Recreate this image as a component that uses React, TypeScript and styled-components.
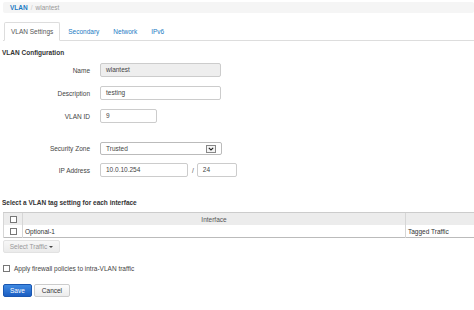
import React from "react";
import styled, { createGlobalStyle } from "styled-components";

const GlobalStyle = createGlobalStyle`
  html, body {
    margin: 0;
    padding: 0;
    background: #fff;
  }
  body {
    font-family: "Liberation Sans", Arial, sans-serif;
    font-size: 6.5px;
    color: #333;
  }
`;

const Page = styled.div`
  padding: 2px 0 0 3px;
`;

const Breadcrumb = styled.div`
  height: 11px;
  line-height: 12px;
  padding-left: 7px;
  background: #f5f5f5;
  border-radius: 2px;
  display: flex;
  gap: 3px;
`;

const Crumb = styled.span<{ $active?: boolean }>`
  color: ${(p) => (p.$active ? "#999" : "#1b7bc4")};
  font-weight: ${(p) => (p.$active ? "normal" : "bold")};
`;

const Sep = styled.span`
  color: #ccc;
`;

const TabBar = styled.div`
  margin-top: 9px;
  height: 18px;
  display: flex;
  gap: 2px;
  border-bottom: 1px solid #ddd;
  padding-left: 1px;
`;

const Tab = styled.div<{ $active?: boolean }>`
  box-sizing: border-box;
  height: 19px;
  margin-bottom: -1px;
  padding: 0 ${(p) => (p.$active ? 6 : 5)}px;
  line-height: 17px;
  border: 1px solid ${(p) => (p.$active ? "#ddd" : "transparent")};
  border-bottom-color: ${(p) => (p.$active ? "#fff" : "transparent")};
  border-radius: 2px 2px 0 0;
  background: ${(p) => (p.$active ? "#fff" : "transparent")};
  color: ${(p) => (p.$active ? "#555" : "#1b7bc4")};
`;

const Heading = styled.div<{ $top: number }>`
  margin-top: ${(p) => p.$top}px;
  font-weight: bold;
  line-height: 8px;
  color: #333;
  margin-left: -1px;
`;

const Form = styled.div`
  margin-top: 6px;
  display: flex;
  flex-direction: column;
`;

const Row = styled.div<{ $gap: number }>`
  display: flex;
  align-items: center;
  margin-bottom: ${(p) => p.$gap}px;
`;

const Label = styled.label`
  width: 87px;
  text-align: right;
  margin-right: 10px;
  color: #444;
`;

const Input = styled.div<{ $w: number; $disabled?: boolean }>`
  box-sizing: border-box;
  width: ${(p) => p.$w}px;
  height: 14px;
  line-height: 12px;
  padding-left: 5px;
  border: 1px solid #ccc;
  border-radius: 2px;
  background: ${(p) => (p.$disabled ? "#eee" : "#fff")};
  color: #444;
`;

const Select = styled.div`
  box-sizing: border-box;
  width: 122px;
  height: 13px;
  padding: 0 5px 0 5px;
  border: 1px solid #bbb;
  border-radius: 2px;
  display: flex;
  align-items: center;
  justify-content: space-between;
  color: #444;
`;

const ArrowBox = styled.span`
  box-sizing: border-box;
  width: 10px;
  height: 8px;
  border: 1px solid #888;
  background: #f4f4f4;
  display: flex;
  align-items: center;
  justify-content: center;
`;

const Slash = styled.span`
  margin: 0 3px 0 4px;
  color: #555;
`;

const Table = styled.table`
  margin-top: 5px;
  width: 100%;
  border-collapse: collapse;
  border-bottom: 1px solid #bbb;
`;

const HeadCell = styled.th<{ $w?: number }>`
  height: 12px;
  padding: 0;
  background: #ececec;
  border-top: 1px solid #ccc;
  border-left: 1px solid #d6d6d6;
  font-weight: normal;
  color: #555;
  text-align: center;
  width: ${(p) => (p.$w ? `${p.$w}px` : "auto")};
`;

const Cell = styled.td<{ $center?: boolean }>`
  height: 12px;
  padding: 0 2px;
  border-left: 1px solid #d6d6d6;
  text-align: ${(p) => (p.$center ? "center" : "left")};
  color: #333;
`;

const Check = styled.span`
  display: inline-block;
  box-sizing: border-box;
  width: 7px;
  height: 7px;
  border: 1px solid #777;
  background: #fff;
  vertical-align: middle;
`;

const GhostButton = styled.div`
  margin-top: 2px;
  box-sizing: border-box;
  width: 57px;
  height: 13px;
  display: flex;
  align-items: center;
  justify-content: center;
  gap: 2px;
  background: linear-gradient(#f7f7f7, #ebebeb);
  border: 1px solid #e2e2e2;
  border-radius: 2px;
  color: #999;
`;

const Caret = styled.span`
  width: 0;
  height: 0;
  border-left: 2px solid transparent;
  border-right: 2px solid transparent;
  border-top: 2px solid #444;
  margin-top: 1px;
`;

const CheckRow = styled.div`
  margin-top: 11px;
  display: flex;
  align-items: center;
  gap: 4px;
  height: 8px;
  color: #444;
`;

const Actions = styled.div`
  margin-top: 12px;
  display: flex;
  gap: 2px;
`;

const Button = styled.button<{ $primary?: boolean }>`
  box-sizing: border-box;
  height: 13px;
  padding: 0 ${(p) => (p.$primary ? 6 : 7)}px;
  font-family: inherit;
  font-size: 6.5px;
  border-radius: 2px;
  border: 1px solid ${(p) => (p.$primary ? "#1a56b0" : "#ccc")};
  background: ${(p) =>
    p.$primary
      ? "linear-gradient(#3f8ae2, #1b5dc2)"
      : "linear-gradient(#fdfdfd, #ececec)"};
  color: ${(p) => (p.$primary ? "#fff" : "#333")};
`;

export default function App() {
  return (
    <>
      <GlobalStyle />
      <Page>
        <Breadcrumb>
          <Crumb>VLAN</Crumb>
          <Sep>/</Sep>
          <Crumb $active>wlantest</Crumb>
        </Breadcrumb>

        <TabBar>
          <Tab $active>VLAN Settings</Tab>
          <Tab>Secondary</Tab>
          <Tab>Network</Tab>
          <Tab>IPv6</Tab>
        </TabBar>

        <Heading $top={8}>VLAN Configuration</Heading>

        <Form>
          <Row $gap={9}>
            <Label>Name</Label>
            <Input $w={121} $disabled>wlantest</Input>
          </Row>
          <Row $gap={9}>
            <Label>Description</Label>
            <Input $w={121}>testing</Input>
          </Row>
          <Row $gap={19}>
            <Label>VLAN ID</Label>
            <Input $w={57}>9</Input>
          </Row>
          <Row $gap={8}>
            <Label>Security Zone</Label>
            <Select>
              <span>Trusted</span>
              <ArrowBox>
                <svg width="6" height="4" viewBox="0 0 6 4">
                  <path d="M0.8 0.8 L3 3 L5.2 0.8" fill="none" stroke="#222" strokeWidth="1.1" />
                </svg>
              </ArrowBox>
            </Select>
          </Row>
          <Row $gap={0}>
            <Label>IP Address</Label>
            <Input $w={88}>10.0.10.254</Input>
            <Slash>/</Slash>
            <Input $w={40}>24</Input>
          </Row>
        </Form>

        <Heading $top={22}>Select a VLAN tag setting for each interface</Heading>

        <Table>
          <thead>
            <tr>
              <HeadCell $w={18}>
                <Check />
              </HeadCell>
              <HeadCell>Interface</HeadCell>
              <HeadCell $w={68}></HeadCell>
            </tr>
          </thead>
          <tbody>
            <tr>
              <Cell $center>
                <Check />
              </Cell>
              <Cell>Optional-1</Cell>
              <Cell>Tagged Traffic</Cell>
            </tr>
          </tbody>
        </Table>

        <GhostButton>
          Select Traffic <Caret />
        </GhostButton>

        <CheckRow>
          <Check />
          <span>Apply firewall policies to intra-VLAN traffic</span>
        </CheckRow>

        <Actions>
          <Button $primary>Save</Button>
          <Button>Cancel</Button>
        </Actions>
      </Page>
    </>
  );
}
